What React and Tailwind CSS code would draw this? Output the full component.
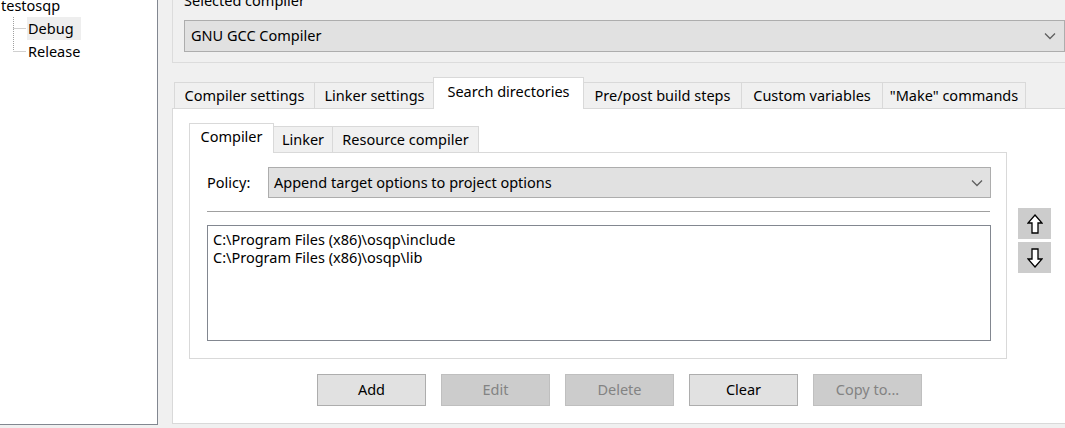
const outerTabs = [
  { label: 'Compiler settings', w: 'w-[140px]' },
  { label: 'Linker settings', w: 'w-[120px]' },
  { label: 'Search directories', w: 'w-[151px]', active: true },
  { label: 'Pre/post build steps', w: 'w-[158px]' },
  { label: 'Custom variables', w: 'w-[141px]' },
  { label: '"Make" commands', w: 'w-[144px]' },
];

const innerTabs = [
  { label: 'Compiler', w: 'w-[85px]', active: true },
  { label: 'Linker', w: 'w-[59px]' },
  { label: 'Resource compiler', w: 'w-[146px]' },
];

const buttons = [
  { label: 'Add' },
  { label: 'Edit', disabled: true },
  { label: 'Delete', disabled: true },
  { label: 'Clear' },
  { label: 'Copy to...', disabled: true },
];

const Chevron = () => (
  <svg width="12" height="8" viewBox="0 0 12 8" className="shrink-0">
    <path d="M1 1.5 L6 6.5 L11 1.5" fill="none" stroke="#5f5f5f" strokeWidth="1.3" />
  </svg>
);

const ArrowUp = () => (
  <svg width="16" height="20" viewBox="0 0 16 20">
    <path d="M8 1 L15 9 L11 9 L11 19 L5 19 L5 9 L1 9 Z" fill="#fff" stroke="#000" strokeWidth="1.3" strokeLinejoin="miter" />
  </svg>
);

const ArrowDown = () => (
  <svg width="16" height="20" viewBox="0 0 16 20">
    <path d="M8 19 L15 11 L11 11 L11 1 L5 1 L5 11 L1 11 Z" fill="#fff" stroke="#000" strokeWidth="1.3" strokeLinejoin="miter" />
  </svg>
);

const App = () => {
  return (
    <div className="w-[1065px] h-[428px] overflow-hidden bg-[#f0f0f0] flex font-['Segoe_UI','Noto_Sans',sans-serif] text-[14.5px] text-[#000]">
      {/* project tree */}
      <div className="w-[158px] h-[425px] shrink-0 bg-white border-r border-b border-[#828790]">
        <div className="pl-[1px] -mt-[4px] leading-[18px]">testosqp</div>
        <div className="flex mt-[3px]">
          <svg width="27" height="46" viewBox="0 0 27 46" className="shrink-0">
            <path d="M13.5 0 V34 M13.5 11.5 H26 M13.5 34.5 H26" fill="none" stroke="#a0a0a0" strokeWidth="1" strokeDasharray="1 1" />
          </svg>
          <div className="flex flex-col">
            <div className="h-[23px] leading-[23px] px-[1px] bg-[#eeeeee]">Debug</div>
            <div className="h-[23px] leading-[23px] px-[1px]">Release</div>
          </div>
        </div>
      </div>

      <div className="flex-1 pl-[14px] flex flex-col">
        {/* Selected compiler group */}
        <div className="h-[63px] shrink-0 border-l border-b border-[#dcdcdc] pl-[11px] pr-[7px] flex flex-col justify-end pb-[10px]">
          <div className="h-[18px] shrink-0 leading-[18px] mb-[11px]">Selected compiler</div>
          <div className="h-[32px] shrink-0 bg-[#e1e1e1] border border-[#adadad] flex items-center justify-between pl-[6px] pr-[8px]">
            <span>GNU GCC Compiler</span>
            <Chevron />
          </div>
        </div>

        {/* outer tabs */}
        <div className="mt-[14px] flex items-end pl-[2px] h-[31px] shrink-0">
          {outerTabs.map((t) => (
            <div
              key={t.label}
              className={
                t.active
                  ? `${t.w} h-[32px] -mb-px relative z-10 bg-white border border-b-0 border-[#d9d9d9] -mx-px flex items-center justify-center pb-[4px]`
                  : `${t.w} h-[26px] bg-[#f0f0f0] border border-b-0 border-r-0 last:border-r border-[#d9d9d9] flex items-center justify-center`
              }
            >
              {t.label}
            </div>
          ))}
        </div>

        {/* outer panel */}
        <div className="h-[316px] w-[900px] shrink-0 bg-white border border-[#d9d9d9] pt-[14px] pl-[16px]">
          <div className="flex items-end h-[29px]">
            {innerTabs.map((t) => (
              <div
                key={t.label}
                className={
                  t.active
                    ? `${t.w} h-[30px] -mb-px relative z-10 bg-white border border-b-0 border-[#d9d9d9] flex items-center justify-center pb-[3px]`
                    : `${t.w} h-[26px] bg-[#f0f0f0] border border-b-0 border-l-0 border-[#d9d9d9] flex items-center justify-center`
                }
              >
                {t.label}
              </div>
            ))}
          </div>

          <div className="flex">
            <div className="w-[818px] h-[207px] border border-[#d9d9d9] bg-white pt-[14px] pl-[17px] pr-[15px] flex flex-col">
              <div className="flex items-center h-[31px]">
                <span className="w-[61px] shrink-0">Policy:</span>
                <div className="flex-1 h-[31px] bg-[#e1e1e1] border border-[#adadad] flex items-center justify-between pl-[5px] pr-[7px]">
                  <span>Append target options to project options</span>
                  <Chevron />
                </div>
              </div>
              <div className="mt-[13px] h-px bg-[#a0a0a0] mr-px" />
              <div className="mt-[13px] h-[116px] border border-[#828790] bg-white px-[5px] pt-[4px] leading-[18px]">
                <div>C:\Program Files (x86)\osqp\include</div>
                <div>C:\Program Files (x86)\osqp\lib</div>
              </div>
            </div>
            <div className="ml-[11px] mt-[56px] flex flex-col gap-[3px]">
              <div className="w-[33px] h-[31px] bg-[#cccccc] flex items-center justify-center"><ArrowUp /></div>
              <div className="w-[33px] h-[31px] bg-[#cccccc] flex items-center justify-center"><ArrowDown /></div>
            </div>
          </div>

          <div className="mt-[15px] pl-[128px] flex gap-[15px]">
            {buttons.map((b) => (
              <div
                key={b.label}
                className={
                  b.disabled
                    ? 'w-[109px] h-[32px] bg-[#cccccc] border border-[#bfbfbf] text-[#838383] flex items-center justify-center'
                    : 'w-[109px] h-[32px] bg-[#e1e1e1] border border-[#adadad] flex items-center justify-center'
                }
              >
                {b.label}
              </div>
            ))}
          </div>
        </div>
      </div>
    </div>
  );
};

export default App;
